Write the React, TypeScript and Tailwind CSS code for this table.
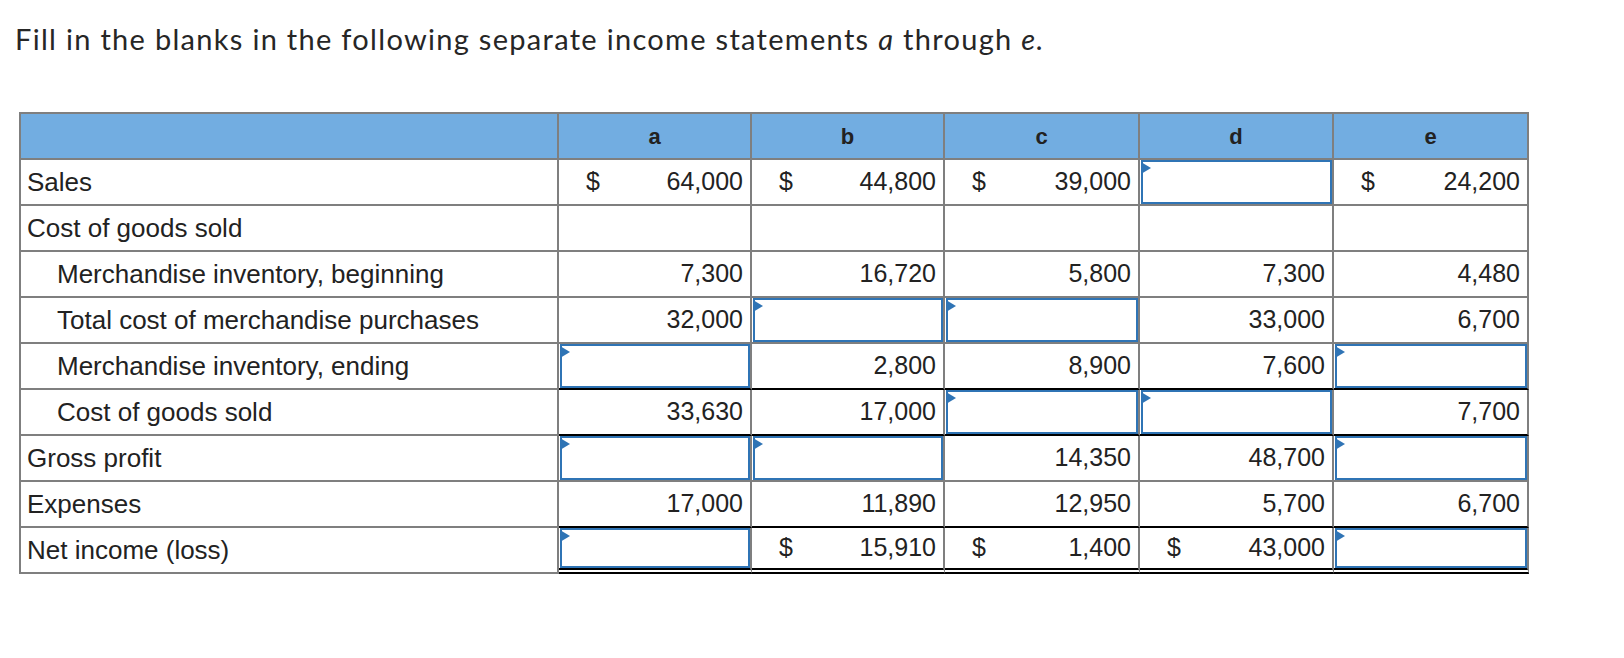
import React from 'react';

type Cell = { value?: string; dollar?: boolean; input?: boolean } | null;

type Row = {
  label: string;
  indent?: boolean;
  line?: 'single' | 'double';
  cells: Cell[];
};

const COLUMNS = ['a', 'b', 'c', 'd', 'e'];

const INPUT: Cell = { input: true };
const num = (value: string, dollar = false): Cell => ({ value, dollar });

const ROWS: Row[] = [
  {
    label: 'Sales',
    cells: [num('64,000', true), num('44,800', true), num('39,000', true), INPUT, num('24,200', true)],
  },
  { label: 'Cost of goods sold', cells: [null, null, null, null, null] },
  {
    label: 'Merchandise inventory, beginning',
    indent: true,
    cells: [num('7,300'), num('16,720'), num('5,800'), num('7,300'), num('4,480')],
  },
  {
    label: 'Total cost of merchandise purchases',
    indent: true,
    cells: [num('32,000'), INPUT, INPUT, num('33,000'), num('6,700')],
  },
  {
    label: 'Merchandise inventory, ending',
    indent: true,
    line: 'single',
    cells: [INPUT, num('2,800'), num('8,900'), num('7,600'), INPUT],
  },
  {
    label: 'Cost of goods sold',
    indent: true,
    line: 'single',
    cells: [num('33,630'), num('17,000'), INPUT, INPUT, num('7,700')],
  },
  {
    label: 'Gross profit',
    cells: [INPUT, INPUT, num('14,350'), num('48,700'), INPUT],
  },
  {
    label: 'Expenses',
    line: 'single',
    cells: [num('17,000'), num('11,890'), num('12,950'), num('5,700'), num('6,700')],
  },
  {
    label: 'Net income (loss)',
    line: 'double',
    cells: [INPUT, num('15,910', true), num('1,400', true), num('43,000', true), INPUT],
  },
];

function InputBox() {
  return (
    <div className="relative ml-px flex-1 self-stretch border-2 border-[#2f74b5] bg-white">
      <svg className="absolute -left-[2px] top-0" width="10" height="12" viewBox="0 0 10 12">
        <polygon points="0,0 10,6 0,12" fill="#2f74b5" />
      </svg>
    </div>
  );
}

function ValueCell({ cell, line }: { cell: Cell; line?: Row['line'] }) {
  const bottom =
    line === 'double'
      ? 'border-b-[6px] [border-bottom-style:double] border-b-black'
      : line === 'single'
        ? 'border-b-2 border-b-black'
        : 'border-b-2 border-b-[#7f7f7f]';

  return (
    <div className={`flex h-[46px] items-center border-r-2 border-r-[#7f7f7f] ${bottom}`}>
      {cell?.input ? (
        <InputBox />
      ) : cell ? (
        <div className="flex w-full items-center justify-between pl-[27px] pr-[7px]">
          <span>{cell.dollar ? '$' : ''}</span>
          <span>{cell.value}</span>
        </div>
      ) : null}
    </div>
  );
}

export default function App() {
  return (
    <div className="min-h-screen bg-white pt-[22px] text-[#222]">
      <p className="ml-[15px] h-[34px] font-['Lato',sans-serif] text-[29px] leading-[34px] tracking-[1.3px] text-[#262626]">
        Fill in the blanks in the following separate income statements <em>a</em> through <em>e.</em>
      </p>

      <div className="ml-[19px] mt-[56px] grid w-fit grid-cols-[538px_193px_193px_195px_194px_195px] border-l-2 border-t-2 border-[#7f7f7f] font-['Liberation_Sans',Arial,sans-serif] text-[25px]">
        {/* Header */}
        <div className="h-[46px] border-b-2 border-r-2 border-b-[#7f7f7f] border-r-[#7f7f7f] bg-[#72ade1]" />
        {COLUMNS.map((col) => (
          <div
            key={col}
            className="flex h-[46px] items-center justify-center border-b-2 border-r-2 border-b-[#7f7f7f] border-r-[#7f7f7f] bg-[#72ade1] text-[22px] font-bold"
          >
            {col}
          </div>
        ))}

        {/* Body */}
        {ROWS.map((row, i) => (
          <React.Fragment key={i}>
            <div
              className={`flex h-[46px] items-center border-b-2 border-r-2 border-b-[#7f7f7f] border-r-[#7f7f7f] text-[26px] ${
                row.indent ? 'pl-[36px]' : 'pl-[6px]'
              }`}
            >
              {row.label}
            </div>
            {row.cells.map((cell, j) => (
              <ValueCell key={j} cell={cell} line={row.line} />
            ))}
          </React.Fragment>
        ))}
      </div>
    </div>
  );
}
